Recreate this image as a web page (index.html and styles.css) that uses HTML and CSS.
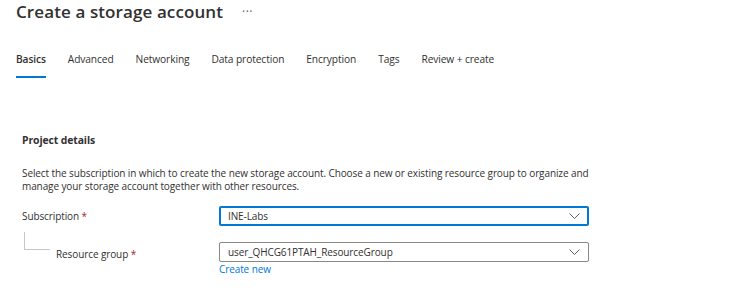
FILE: index.html
```html
<!DOCTYPE html>
<html lang="en">
<head>
  <meta charset="utf-8">
  <title>Create a storage account</title>
  <link rel="stylesheet" href="styles.css">
</head>
<body>
<div class="blade">
  <div class="blade-header">
    <h1 class="blade-title">Create a storage account</h1>
    <span class="blade-more">&middot;&middot;&middot;</span>
  </div>

  <div class="tabs">
    <span class="tab active">Basics</span>
    <span class="tab">Advanced</span>
    <span class="tab">Networking</span>
    <span class="tab">Data protection</span>
    <span class="tab">Encryption</span>
    <span class="tab">Tags</span>
    <span class="tab">Review + create</span>
  </div>

  <div class="section">
    <h2 class="section-title">Project details</h2>
    <p class="section-desc">Select the subscription in which to create the new storage account. Choose a new or existing resource group to organize and manage your storage account together with other resources.</p>

    <div class="form-row">
      <label class="field-label">Subscription <span class="req">*</span></label>
      <div class="dropdown focused">
        <span class="dropdown-text">INE-Labs</span>
        <svg class="chevron" width="11" height="6" viewBox="0 0 11 6"><path d="M0.5 0.5 L5.5 5.5 L10.5 0.5" fill="none" stroke="#605e5c" stroke-width="1"/></svg>
      </div>
    </div>

    <div class="form-row sub">
      <div class="tree-line"></div>
      <label class="field-label">Resource group <span class="req">*</span></label>
      <div class="field-col">
        <div class="dropdown">
          <span class="dropdown-text">user_QHCG61PTAH_ResourceGroup</span>
          <svg class="chevron" width="11" height="6" viewBox="0 0 11 6"><path d="M0.5 0.5 L5.5 5.5 L10.5 0.5" fill="none" stroke="#605e5c" stroke-width="1"/></svg>
        </div>
        <a class="link" href="#">Create new</a>
      </div>
    </div>
  </div>
</div>
</body>
</html>
```

FILE: styles.css
```css
body {
  margin: 0;
  background: #ffffff;
  color: #323130;
  font-family: "Open Sans", "Noto Sans", sans-serif;
  font-size: 10px;
  letter-spacing: -0.1px;
}

.blade {
  padding-left: 16px;
}

/* header */
.blade-header {
  display: flex;
  align-items: center;
  height: 23px;
}

.blade-title {
  margin: 0;
  font-size: 17px;
  font-weight: 600;
  line-height: 23px;
  letter-spacing: 0.1px;
  color: #323130;
}

.blade-more {
  margin-left: 19px;
  font-size: 12px;
  color: #605e5c;
  letter-spacing: 0.5px;
}

/* tabs */
.tabs {
  display: flex;
  gap: 22px;
  margin-top: 28px;
  font-size: 10.2px;
}

.tab {
  padding: 1px 0 10px;
  line-height: 14px;
  color: #323130;
  border-bottom: 2px solid transparent;
}

.tab.active {
  font-weight: 600;
  border-bottom-color: #0078d4;
}

/* section */
.section {
  padding-left: 6px;
  margin-top: 55px;
}

.section-title {
  margin: 0;
  font-size: 10.4px;
  font-weight: 700;
  line-height: 14px;
}

.section-desc {
  margin: 20px 0 0;
  width: 580px;
  line-height: 13px;
}

.form-row {
  display: flex;
  align-items: flex-start;
  margin-top: 13px;
  position: relative;
}

.field-label {
  width: 197px;
  line-height: 20px;
}

.req {
  color: #a4262c;
}

.dropdown {
  box-sizing: border-box;
  width: 370px;
  height: 20px;
  border: 1px solid #8a8886;
  border-radius: 2px;
  display: flex;
  align-items: center;
  justify-content: space-between;
  padding: 0 8px;
}

.dropdown.focused {
  border: 2px solid #0078d4;
  padding: 0 7px;
}

.form-row.sub {
  margin-top: 16px;
}

.form-row.sub .field-label {
  width: 163px;
  padding-left: 34px;
  padding-top: 2px;
}

.tree-line {
  position: absolute;
  left: 2px;
  top: -10px;
  width: 25px;
  height: 17px;
  border-left: 1px solid #c8c6c4;
  border-bottom: 1px solid #c8c6c4;
}

.field-col {
  display: flex;
  flex-direction: column;
}

.link {
  color: #0078d4;
  text-decoration: none;
  line-height: 14px;
}
```
